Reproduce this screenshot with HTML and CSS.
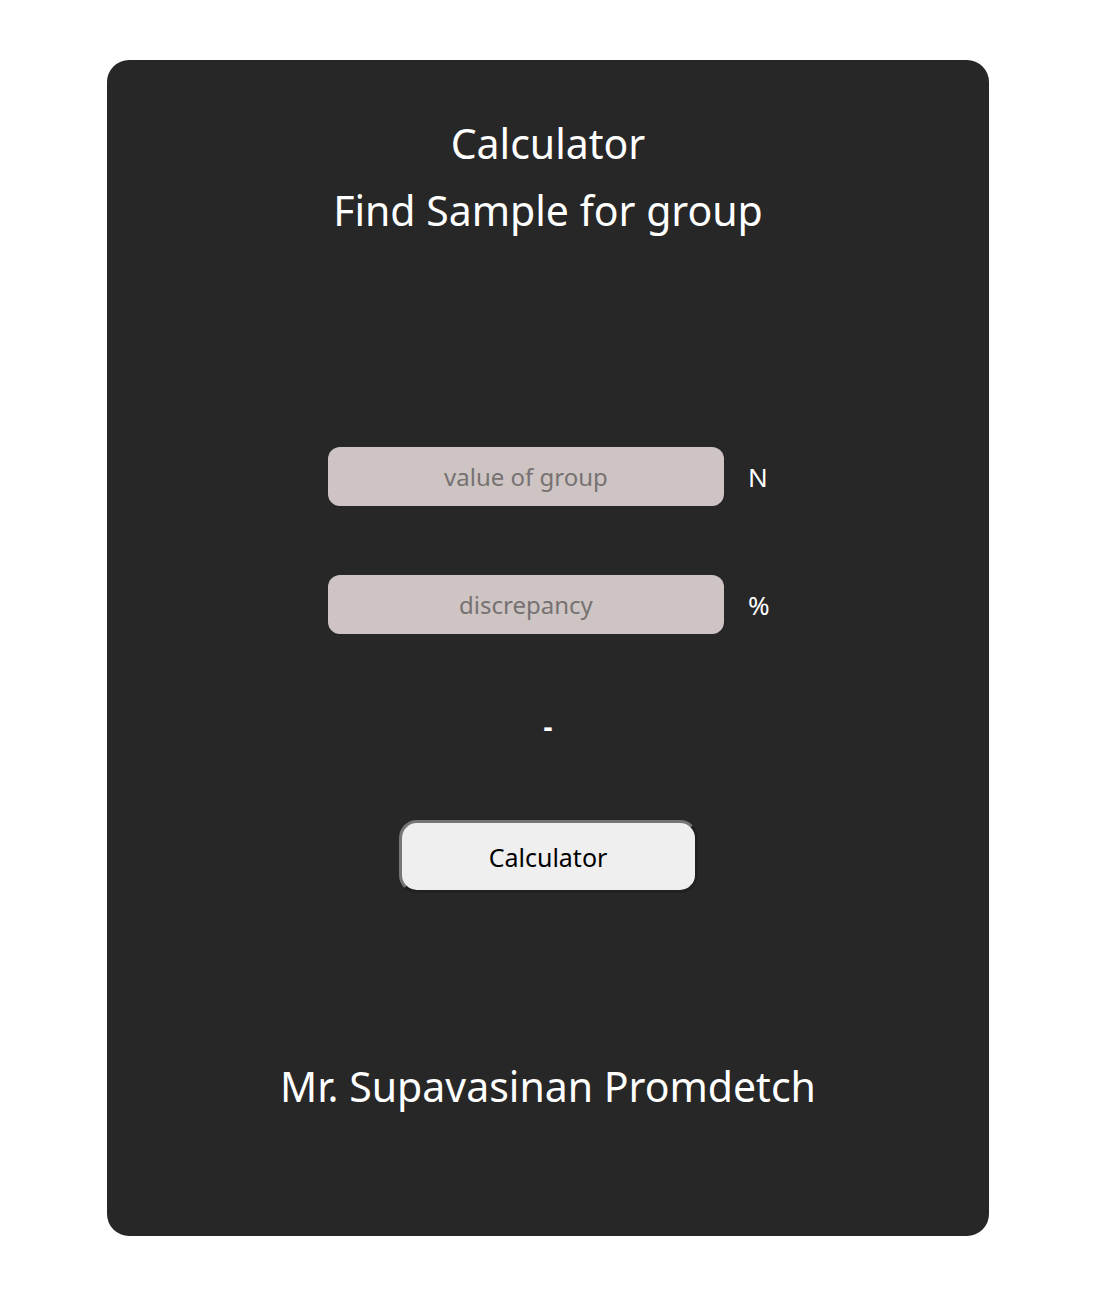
FILE: index.html
```html
<!DOCTYPE html>
<html lang="en">
  <head>
    <meta charset="UTF-8" />
    <meta name="viewport" content="width=device-width, initial-scale=1.0" />
    <title>Calculator - Find Sample for group</title>
    <link rel="stylesheet" href="styles.css">
  </head>
  <body>
    <div class="card">
      <h1 class="title">Calculator</h1>
      <h2 class="subtitle">Find Sample for group</h2>

      <div class="form">
        <div class="field">
          <input class="field-input" type="text" placeholder="value of group" />
          <span class="field-unit">N</span>
        </div>
        <div class="field">
          <input class="field-input" type="text" placeholder="discrepancy" />
          <span class="field-unit">%</span>
        </div>
      </div>

      <p class="result">-</p>

      <button class="calc-btn" type="button">Calculator</button>

      <p class="author">Mr. Supavasinan Promdetch</p>
    </div>
  </body>
</html>
```

FILE: styles.css
```css
body {
  margin: 0;
  background: #ffffff;
  font-family: "Noto Sans", "Open Sans", sans-serif;
}

.card {
  width: 882px;
  height: 1176px;
  margin: 60px 0 0 107px;
  background: #272727;
  border-radius: 22px;
  color: #ffffff;
  display: flex;
  flex-direction: column;
  align-items: center;
  box-sizing: border-box;
  padding-top: 53px;
}

.title,
.subtitle {
  margin: 0;
  font-size: 41px;
  font-weight: 400;
  line-height: 60px;
}

.subtitle {
  margin-top: 7px;
}

.form {
  margin-top: 207px;
  display: flex;
  flex-direction: column;
  gap: 69px;
  /* shift so inputs sit left of centre, unit on the right */
  padding-left: 24px;
}

.field {
  display: flex;
  align-items: center;
  gap: 24px;
}

.field-input {
  width: 396px;
  height: 59px;
  box-sizing: border-box;
  border: none;
  border-radius: 12px;
  background: #cdc4c3;
  font-family: inherit;
  font-size: 24px;
  text-align: center;
  color: #333;
  outline: none;
}

.field-input::placeholder {
  color: #777272;
}

.field-unit {
  font-size: 26px;
  width: 44px;
}

.result {
  margin: 74px 0 0;
  font-size: 28px;
  font-weight: 700;
  line-height: 36px;
}

.calc-btn {
  margin-top: 76px;
  width: 299px;
  height: 73px;
  border: 3px outset #767676;
  border-radius: 18px;
  background: #efefef;
  font-family: inherit;
  font-size: 25px;
  color: #000;
}

.author {
  margin: 163px 0 0;
  font-size: 41px;
  line-height: 60px;
}
```
